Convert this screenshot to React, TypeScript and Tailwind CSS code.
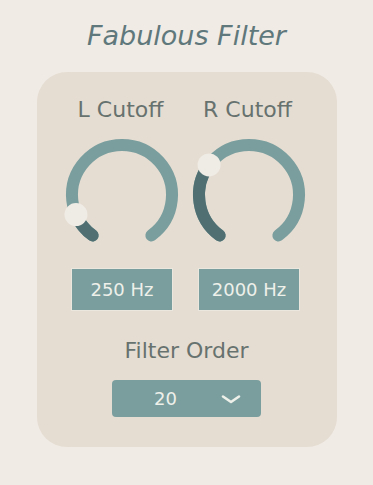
import React from 'react';

const START = 216;
const END = 504;

function polar(cx: number, cy: number, r: number, deg: number) {
  const a = (deg * Math.PI) / 180;
  return { x: cx + r * Math.sin(a), y: cy - r * Math.cos(a) };
}

function arc(cx: number, cy: number, r: number, from: number, to: number) {
  const s = polar(cx, cy, r, from);
  const e = polar(cx, cy, r, to);
  const large = to - from > 180 ? 1 : 0;
  return `M ${s.x.toFixed(2)} ${s.y.toFixed(2)} A ${r} ${r} 0 ${large} 1 ${e.x.toFixed(2)} ${e.y.toFixed(2)}`;
}

function Knob({ angle }: { angle: number }) {
  const c = 62;
  const r = 50;
  const thumb = polar(c, c, r, angle);
  return (
    <svg width="124" height="124" viewBox="0 0 124 124" className="block">
      <path d={arc(c, c, r, START, END)} fill="none" stroke="#7a9e9e" strokeWidth="12" strokeLinecap="round" />
      <path d={arc(c, c, r, START, angle)} fill="none" stroke="#4f6f72" strokeWidth="12" strokeLinecap="round" />
      <circle cx={thumb.x} cy={thumb.y} r="11.5" fill="#efebe5" />
    </svg>
  );
}

function CutoffColumn({ label, value, angle }: { label: string; value: string; angle: number }) {
  return (
    <div className="flex flex-col items-center">
      <div className="mr-[3px] text-[22px] leading-[26px] text-[#67726f]">{label}</div>
      <div className="mt-[10px]">
        <Knob angle={angle} />
      </div>
      <div className="mt-[11px] flex h-[43px] w-[102px] items-center justify-center border border-[#ece7de] bg-[#7a9e9e] text-[18px] text-[#eef0ea]">
        {value}
      </div>
    </div>
  );
}

export default function App() {
  return (
    <div
      className="flex h-[485px] w-full flex-col items-center bg-[#f0ebe5]"
      style={{ fontFamily: '"DejaVu Sans", Verdana, sans-serif' }}
    >
      <h1 className="mt-[20px] text-[27px] leading-[32px] italic text-[#5f787b]">Fabulous Filter</h1>
      <div className="mt-[20px] flex w-[300px] flex-col items-center rounded-[30px] bg-[#e5ddd2] pt-[25px] pb-[30px]">
        <div className="grid grid-cols-[115px_115px] gap-x-[12px] pr-[2px]">
          <CutoffColumn label="L Cutoff" value="250 Hz" angle={247} />
          <CutoffColumn label="R Cutoff" value="2000 Hz" angle={307} />
        </div>
        <div className="mt-[27px] text-[22px] leading-[26px] text-[#67726f]">Filter Order</div>
        <div className="mt-[16px] flex h-[37px] w-[149px] items-center rounded-[4px] bg-[#7a9e9e] text-[18px] text-[#eef0ea]">
          <span className="ml-[42px]">20</span>
          <svg width="20" height="10" viewBox="0 0 20 10" className="ml-[44px]">
            <path d="M2 2.5 L10 8 L18 2.5" fill="none" stroke="#eef0ea" strokeWidth="2.6" strokeLinecap="round" strokeLinejoin="round" />
          </svg>
        </div>
      </div>
    </div>
  );
}
